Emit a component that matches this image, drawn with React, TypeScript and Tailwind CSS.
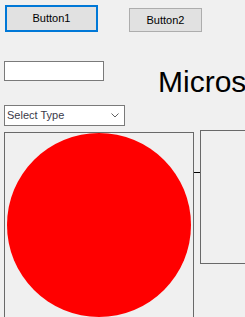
export default function App() {
  return (
    <div
      className="w-[245px] h-[317px] overflow-hidden bg-[#f0f0f0] text-black"
      style={{ fontFamily: '"Liberation Sans", Arial, sans-serif' }}
    >
      {/* ── Botones ── */}
      <div className="flex items-start pt-[5px] pl-[5px] h-[61px]">
        <button className="w-[93px] h-[27px] border-2 border-[#0078d7] bg-[#e1e1e1] text-[11px] leading-none">
          Button1
        </button>
        <button className="ml-[31px] mt-[3px] w-[73px] h-[24px] border border-[#adadad] bg-[#e1e1e1] text-[11px] leading-none">
          Button2
        </button>
      </div>

      {/* ── Textbox + título ── */}
      <div className="flex items-start pl-[4px] h-[44px]">
        <input className="w-[100px] h-[20px] border border-[#7a7a7a] bg-white outline-none" />
        <span className="ml-[54px] mt-[6px] text-[30px] leading-[30px] whitespace-nowrap">
          Microsoft
        </span>
      </div>

      {/* ── Combo ── */}
      <div className="pl-[4px] h-[25px]">
        <div className="w-[121px] h-[21px] border border-[#7a7a7a] bg-white flex items-center pl-[2px] pr-[5px]">
          <span className="flex-1 text-[11px] text-[#3a3a4a] leading-none">Select Type</span>
          <svg width="8" height="5" viewBox="0 0 8 5" className="text-[#606060]">
            <polyline points="0.5,0.5 4,4 7.5,0.5" fill="none" stroke="currentColor" strokeWidth="1" />
          </svg>
        </div>
      </div>

      {/* ── Paneles ── */}
      <div className="flex items-start pl-[4px]">
        <div className="mt-[2px] w-[190px] h-[200px] border border-[#696969] pl-[2px] shrink-0">
          <div className="w-[184px] h-[184px] rounded-full bg-[#ff0000]" />
        </div>
        <div className="mt-[42px] w-[6px] h-px bg-black shrink-0" />
        <div className="w-[60px] h-[134px] border border-[#696969] shrink-0" />
      </div>
    </div>
  );
}
